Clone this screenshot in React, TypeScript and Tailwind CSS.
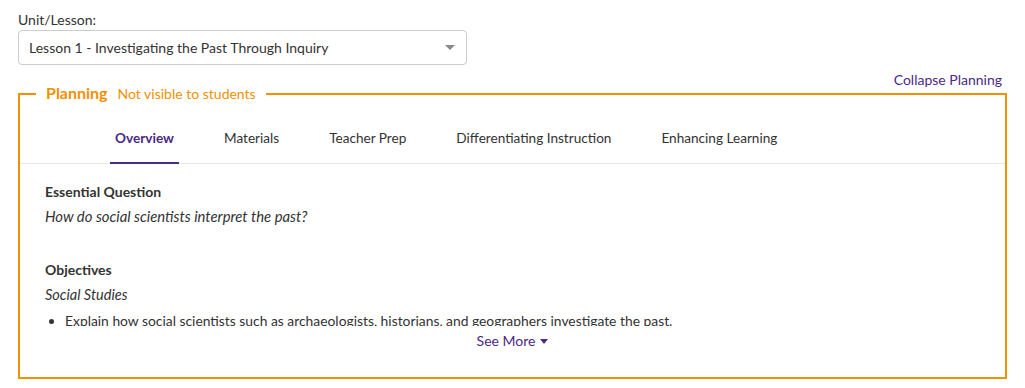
import { useState } from "react"

const tabs = [
  "Overview",
  "Materials",
  "Teacher Prep",
  "Differentiating Instruction",
  "Enhancing Learning"
]

export default function App() {
  const [active, setActive] = useState(0)

  return (
    <div className="min-h-screen bg-white px-[18px] pt-[11px] font-['Lato',sans-serif] text-[#333]">
      {/* Unit / lesson picker */}
      <label className="block text-[14px] leading-[17px]">Unit/Lesson:</label>
      <div className="mt-[2px] flex h-[35px] w-[449px] items-center justify-between rounded-[4px] border border-[#ccc] pl-[10px] pr-[11px]">
        <span className="text-[14px]">Lesson 1 - Investigating the Past Through Inquiry</span>
        <span className="h-0 w-0 border-x-[5px] border-t-[5px] border-x-transparent border-t-[#888]" />
      </div>

      <div className="mt-[6px] pr-[5px] text-right text-[14px] leading-[17px] text-[#4b2a85]">
        Collapse Planning
      </div>

      <fieldset className="-mt-[5px] w-[989px] border-2 border-[#f29100] p-0">
        <legend className="ml-[16px] px-[10px] leading-[20px] text-[#f29100]">
          <span className="text-[16px] font-bold">Planning</span>
          <span className="ml-[10px] text-[14px]">Not visible to students</span>
        </legend>

        {/* Tabs */}
        <div className="flex gap-[40px] border-b border-[#e8e8e8] pl-[90px]">
          {tabs.map((t, i) => (
            <button
              key={t}
              onClick={() => setActive(i)}
              className={`-mb-px border-b-2 px-[5px] pb-[14px] pt-[24px] text-[13.6px] leading-[20px] ${
                active === i
                  ? "border-[#4b2a85] font-bold text-[#4b2a85]"
                  : "border-transparent text-[#333]"
              }`}
            >
              {t}
            </button>
          ))}
        </div>

        {/* Overview content, clipped preview */}
        <div className="h-[162px] overflow-hidden px-[25px] pt-[15px] text-[14px] leading-[25px]">
          <h3 className="font-bold">Essential Question</h3>
          <p className="text-[14.85px] italic">How do social scientists interpret the past?</p>
          <h3 className="mt-[28px] font-bold">Objectives</h3>
          <p className="text-[14.5px] italic">Social Studies</p>
          <ul className="mt-px list-disc pl-[2px]">
            <li className="ml-[18px] text-[13.85px]">
              Explain how social scientists such as archaeologists, historians, and geographers investigate the past.
            </li>
          </ul>
        </div>

        <div className="flex justify-center pb-[26px] pt-[5px]">
          <button className="flex items-center gap-[5px] text-[14px] leading-[20px] text-[#4b2a85]">
            See More
            <span className="h-0 w-0 border-x-[4px] border-t-[5px] border-x-transparent border-t-[#4b2a85]" />
          </button>
        </div>
      </fieldset>
    </div>
  )
}
